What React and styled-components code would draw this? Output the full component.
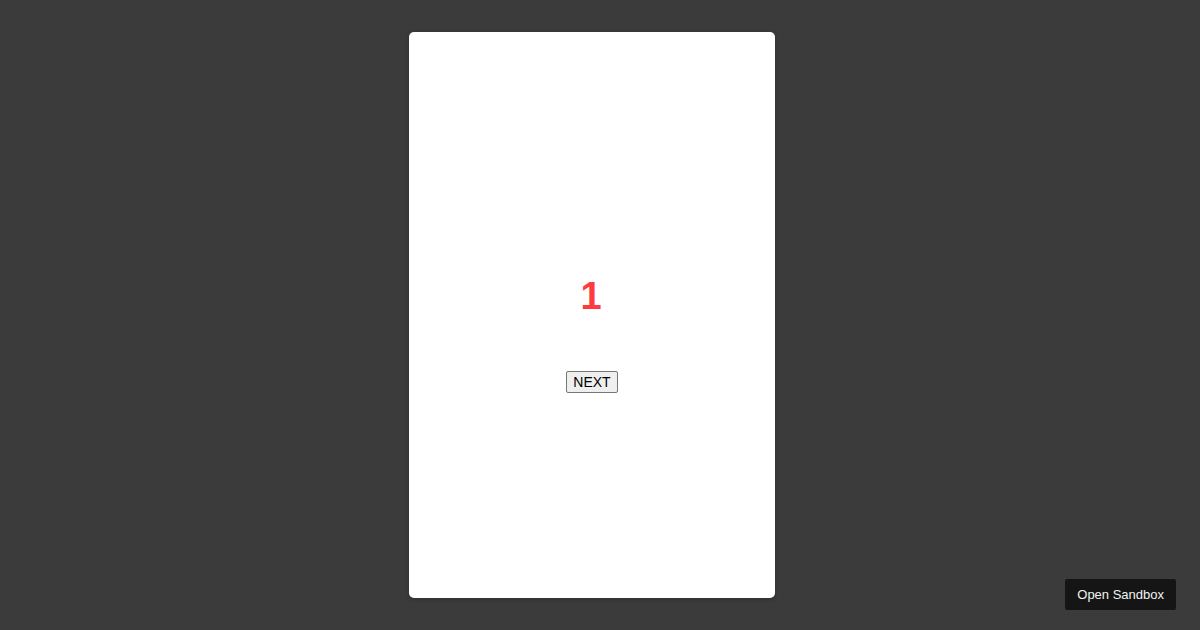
import React, { useState } from 'react';
import styled, { createGlobalStyle } from 'styled-components';

const GlobalStyle = createGlobalStyle`
  html, body {
    margin: 0;
    padding: 0;
    height: 100%;
    background: #3b3b3b;
    font-family: "Liberation Sans", Arial, sans-serif;
  }
`;

const Page = styled.div`
  display: flex;
  align-items: center;
  justify-content: center;
  height: 630px;
  padding-right: 16px;
  box-sizing: border-box;
`;

const Card = styled.div`
  display: flex;
  flex-direction: column;
  align-items: center;
  justify-content: center;
  width: 366px;
  height: 566px;
  padding-top: 38px;
  box-sizing: border-box;
  background: #ffffff;
  border-radius: 5px;
  box-shadow: 0 1px 4px rgba(0, 0, 0, 0.25);
`;

const Count = styled.div`
  font-size: 38px;
  font-weight: 700;
  color: #ff3b3f;
  line-height: 1.15;
  transform: translateX(-1px);
`;

const NextButton = styled.button`
  margin-top: 53px;
  padding: 2px 6px;
  font-family: "Liberation Sans", Arial, sans-serif;
  font-size: 14px;
  line-height: 16px;
  color: #000;
  background: #efefef;
  border: 1px solid #767676;
  border-radius: 2px;
  cursor: pointer;
`;

const SandboxLink = styled.a`
  position: fixed;
  right: 24px;
  bottom: 20px;
  display: flex;
  align-items: center;
  height: 31px;
  padding: 0 12px;
  box-sizing: border-box;
  background: #151515;
  color: #f2f2f2;
  font-family: "Liberation Sans", Arial, sans-serif;
  font-size: 13px;
  border-radius: 2px;
  text-decoration: none;
`;

const App = () => {
  const [count, setCount] = useState(1);

  return (
    <>
      <GlobalStyle />
      <Page>
        <Card>
          <Count>{count}</Count>
          <NextButton onClick={() => setCount(count + 1)}>NEXT</NextButton>
        </Card>
      </Page>
      <SandboxLink href="#">Open Sandbox</SandboxLink>
    </>
  );
};

export default App;
